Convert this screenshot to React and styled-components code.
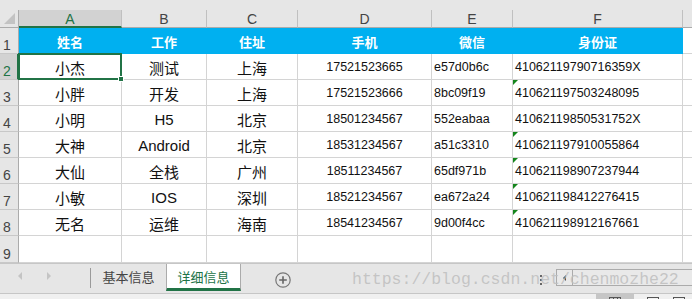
import React from "react";
import styled, { createGlobalStyle } from "styled-components";

const GlobalStyle = createGlobalStyle`
  body {
    margin: 0;
    background: #fff;
    overflow: hidden;
    font-family: "Liberation Sans", "Noto Sans CJK SC", sans-serif;
  }
`;

const green = "#217346";
const grid = "#d4d4d4";

const Page = styled.div`
  width: 692px;
  height: 299px;
  display: flex;
  flex-direction: column;
  background: #e6e6e6;
  overflow: hidden;
`;

const TopStrip = styled.div`
  flex: none;
  height: 10px;
  background: #e6e6e6;
`;

const Sheet = styled.div`
  flex: none;
  display: grid;
  grid-template-columns: 19px 103px 85px 91px 134px 81px 170px 1fr;
  grid-template-rows: 18px repeat(8, 26px) 27px;
  background: #fff;
`;

const Corner = styled.div`
  position: relative;
  background: #e6e6e6;
  border-right: 1px solid #ababab;
  border-bottom: 1px solid #ababab;
  box-sizing: border-box;

  &::after {
    content: "";
    position: absolute;
    right: 3px;
    bottom: 3px;
    border-left: 11px solid transparent;
    border-bottom: 11px solid #c3c3c3;
  }
`;

const ColHead = styled.div`
  display: flex;
  align-items: center;
  justify-content: center;
  box-sizing: border-box;
  padding-top: 1px;
  font-size: 14px;
  color: ${(p) => (p.$active ? green : "#444")};
  background: ${(p) => (p.$active ? "#d2d2d2" : "#e6e6e6")};
  border-right: ${(p) => (p.$last ? "none" : "1px solid #c0c0c0")};
  border-bottom: ${(p) => (p.$active ? `2px solid ${green}` : "1px solid #ababab")};
`;

const RowHead = styled.div`
  display: flex;
  align-items: flex-end;
  box-sizing: border-box;
  padding-left: 3px;
  font-size: 14px;
  line-height: 16px;
  color: ${(p) => (p.$active ? green : "#444")};
  background: ${(p) => (p.$active ? "#d2d2d2" : "#e6e6e6")};
  border-right: ${(p) => (p.$active ? `2px solid ${green}` : "1px solid #ababab")};
  border-bottom: 1px solid #c8c8c8;
`;

const Cell = styled.div`
  position: relative;
  display: flex;
  align-items: center;
  justify-content: ${(p) => (p.$align === "left" ? "flex-start" : "center")};
  box-sizing: border-box;
  padding: 1px 2px 0;
  white-space: nowrap;
  font-size: ${(p) => (p.$head ? "13px" : p.$small ? "12.5px" : "15px")};
  font-weight: ${(p) => (p.$head ? 700 : 400)};
  color: ${(p) => (p.$head ? "#fff" : "#111")};
  background: ${(p) => (p.$head ? "#00b0f0" : "#fff")};
  border-right: ${(p) => (p.$edge ? "none" : `1px solid ${p.$head ? "#00b0f0" : grid}`)};
  border-bottom: 1px solid ${(p) => (p.$head ? "#00b0f0" : grid)};
  z-index: ${(p) => (p.$selected ? 2 : "auto")};

  ${(p) =>
    p.$mark &&
    `
    &::before {
      content: "";
      position: absolute;
      left: 0;
      top: 0;
      border-top: 5px solid #14851c;
      border-right: 5px solid transparent;
    }
  `}

  ${(p) =>
    p.$selected &&
    `
    &::after {
      content: "";
      position: absolute;
      inset: -1px;
      border: 2px solid ${green};
    }
    &::before {
      content: "";
      position: absolute;
      right: -3px;
      bottom: -3px;
      width: 6px;
      height: 6px;
      box-sizing: border-box;
      background: ${green};
      border: 1px solid #fff;
      z-index: 3;
    }
  `}
`;

const TabBar = styled.div`
  position: relative;
  flex: none;
  height: 30px;
  box-sizing: border-box;
  display: flex;
  align-items: flex-start;
  background: #e6e6e6;
  border-top: 1px solid #c6c6c6;
`;

const Nav = styled.div`
  width: 90px;
  height: 24px;
  display: flex;
  align-items: center;
  gap: 25px;
  padding-left: 18px;
  box-sizing: border-box;
`;

const Arrow = styled.span`
  width: 0;
  height: 0;
  border-top: 4px solid transparent;
  border-bottom: 4px solid transparent;
  ${(p) =>
    p.$dir === "left"
      ? "border-right: 4px solid #c4c4c4;"
      : "border-left: 4px solid #c4c4c4;"}
`;

const Divider = styled.div`
  width: 1px;
  height: 20px;
  margin-top: 4px;
  background: #9a9a9a;
`;

const Tab = styled.div`
  width: 75px;
  height: ${(p) => (p.$active ? "27px" : "24px")};
  box-sizing: border-box;
  display: flex;
  align-items: center;
  justify-content: center;
  font-family: "Noto Sans CJK SC", sans-serif;
  font-size: 13px;
  color: ${(p) => (p.$active ? green : "#444")};
  background: ${(p) => (p.$active ? "#fff" : "transparent")};
  border-left: ${(p) => (p.$active ? "1px solid #ababab" : "none")};
  border-right: ${(p) => (p.$active ? "1px solid #ababab" : "none")};
  border-bottom: ${(p) => (p.$active ? `3px solid ${green}` : "none")};
`;

const AddButton = styled.div`
  width: 16px;
  height: 16px;
  margin: 8px 0 0 34px;
  display: flex;
`;

const Spacer = styled.div`
  flex: 1;
`;

const Splitter = styled.div`
  width: 2px;
  height: 10px;
  margin: 11px 14px 0 0;
  background: repeating-linear-gradient(to bottom, #666 0 2px, transparent 2px 4px);
`;

const Scroll = styled.div`
  width: 136px;
  height: 17px;
  margin-top: 5px;
  box-sizing: border-box;
  display: flex;
  border: 1px solid #ababab;
  border-right: none;
  background: #e9e9e9;
`;

const ScrollButton = styled.div`
  width: 15px;
  display: flex;
  align-items: center;
  justify-content: center;
  border-right: 1px solid #ababab;

  &::after {
    content: "";
    border-top: 3px solid transparent;
    border-bottom: 3px solid transparent;
    border-right: 3px solid #444;
  }
`;

const Watermark = styled.div`
  position: absolute;
  left: 352px;
  top: 8px;
  font-family: "Liberation Mono", monospace;
  font-size: 16.5px;
  line-height: 1;
  color: rgba(190, 190, 190, 0.85);
  white-space: nowrap;
  z-index: 3;
`;

const StatusBar = styled.div`
  flex: 1;
  display: flex;
  align-items: flex-start;
  background: #f0f0f0;
  border-top: 1px solid #c6c6c6;
  padding-left: 596px;
  gap: 12px;
`;

const ViewButton = styled.div`
  width: ${(p) => (p.$active ? "38px" : "14px")};
  height: 6px;
  display: flex;
  justify-content: center;
  background: ${(p) => (p.$active ? "#c6c6c6" : "transparent")};

  &::after {
    content: "";
    width: 12px;
    height: 8px;
    margin-top: 3px;
    box-sizing: border-box;
    border: 1px solid #555;
    background: ${(p) =>
      p.$active ? "linear-gradient(to right, transparent 3px, #555 3px 4px, transparent 4px 7px, #555 7px 8px, transparent 8px)" : "transparent"};
  }
`;

const columns = ["A", "B", "C", "D", "E", "F", ""];
const heads = ["姓名", "工作", "住址", "手机", "微信", "身份证"];
const aligns = ["center", "center", "center", "center", "left", "left"];
const small = [false, false, false, true, true, true];

const rows = [
  { values: ["小杰", "测试", "上海", "17521523665", "e57d0b6c", "41062119790716359X"], mark: false },
  { values: ["小胖", "开发", "上海", "17521523666", "8bc09f19", "410621197503248095"], mark: true },
  { values: ["小明", "H5", "北京", "18501234567", "552eabaa", "41062119850531752X"], mark: false },
  { values: ["大神", "Android", "北京", "18531234567", "a51c3310", "410621197910055864"], mark: true },
  { values: ["大仙", "全栈", "广州", "18511234567", "65df971b", "410621198907237944"], mark: true },
  { values: ["小敏", "IOS", "深圳", "18521234567", "ea672a24", "410621198412276415"], mark: true },
  { values: ["无名", "运维", "海南", "18541234567", "9d00f4cc", "410621198912167661"], mark: true },
];

export default function App() {
  return (
    <Page>
      <GlobalStyle />
      <TopStrip />
      <Sheet>
        <Corner />
        {columns.map((c, i) => (
          <ColHead key={i} $active={i === 0} $last={i === columns.length - 1}>
            {c}
          </ColHead>
        ))}

        <RowHead>1</RowHead>
        {heads.map((h) => (
          <Cell key={h} $head>
            {h}
          </Cell>
        ))}
        <Cell $edge />

        {rows.map((r, ri) => (
          <React.Fragment key={ri}>
            <RowHead $active={ri === 0}>{ri + 2}</RowHead>
            {r.values.map((v, ci) => (
              <Cell
                key={ci}
                $align={aligns[ci]}
                $small={small[ci]}
                $selected={ri === 0 && ci === 0}
                $mark={ci === 5 && r.mark}
              >
                {v}
              </Cell>
            ))}
            <Cell $edge />
          </React.Fragment>
        ))}

        <RowHead>9</RowHead>
        {heads.map((h) => (
          <Cell key={h} />
        ))}
        <Cell $edge />
      </Sheet>

      <TabBar>
        <Nav>
          <Arrow $dir="left" />
          <Arrow $dir="right" />
        </Nav>
        <Divider />
        <Tab>基本信息</Tab>
        <Tab $active>详细信息</Tab>
        <AddButton>
          <svg width="16" height="16" viewBox="0 0 16 16">
            <circle cx="8" cy="8" r="7.2" fill="none" stroke="#777" strokeWidth="1.2" />
            <path d="M8 4.2v7.6M4.2 8h7.6" stroke="#666" strokeWidth="1.6" />
          </svg>
        </AddButton>
        <Spacer />
        <Splitter />
        <Scroll>
          <ScrollButton />
        </Scroll>
        <Watermark>https://blog.csdn.net/chenmozhe22</Watermark>
      </TabBar>

      <StatusBar>
        <ViewButton $active />
        <ViewButton />
        <ViewButton />
      </StatusBar>
    </Page>
  );
}
